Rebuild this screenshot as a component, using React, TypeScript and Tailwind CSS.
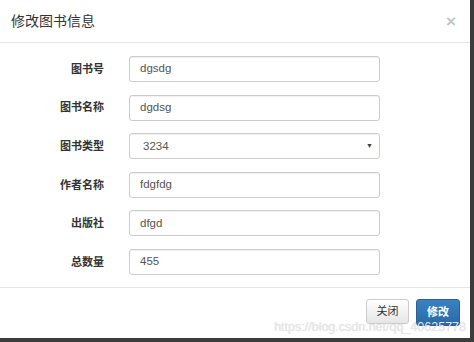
const fields = [
  { label: "图书号", value: "dgsdg" },
  { label: "图书名称", value: "dgdsg" },
  { label: "图书类型", value: "3234", select: true },
  { label: "作者名称", value: "fdgfdg" },
  { label: "出版社", value: "dfgd" },
  { label: "总数量", value: "455" },
];

const font = "font-['Liberation_Sans','Noto_Sans_CJK_SC',sans-serif]";

export default function App() {
  return (
    <div className={`h-[342px] w-[474px] overflow-hidden bg-[#3c3c3c] ${font}`}>
      <div className="relative flex h-[338px] w-[470px] flex-col bg-white">
        <div className="flex h-[43px] items-center justify-between border-b border-[#e5e5e5] pl-[11px] pr-[14px]">
          <h1 className="text-[14px] leading-none text-[#333]">修改图书信息</h1>
          <span className="text-[17px] font-bold leading-none text-[#c4c4c4]">×</span>
        </div>

        <div className="flex flex-col gap-[12.6px] border-b border-[#e5e5e5] pb-[12px] pt-[13px]">
          {fields.map((f) => (
            <div key={f.label} className="flex items-center">
              <label className="w-[104px] text-right text-[11px] font-bold text-[#333]">
                {f.label}
              </label>
              <div className="ml-[25px] flex h-[26px] w-[251px] items-center justify-between rounded-[3px] border border-[#ccc] pl-[10px] pr-[6px] text-[11.5px] text-[#555] shadow-[inset_0_1px_1px_rgba(0,0,0,0.06)]">
                <span className={f.select ? "pl-[3px]" : ""}>{f.value}</span>
                {f.select ? (
                  <span className="text-[7px] text-[#444]">▼</span>
                ) : null}
              </div>
            </div>
          ))}
        </div>

        <div className="flex flex-1 items-start justify-end gap-[7px] pr-[10px] pt-[11px]">
          <button className="h-[25px] w-[43px] rounded-[3px] border border-[#ccc] bg-gradient-to-b from-white to-[#e6e6e6] text-[11px] text-[#333]">
            关闭
          </button>
          <button className="h-[27px] w-[44px] rounded-[3px] border border-[#2a5f8f] bg-gradient-to-b from-[#3a82c2] to-[#2a6aa6] text-[11px] font-bold text-white">
            修改
          </button>
        </div>

        <span className="pointer-events-none absolute bottom-[1px] right-[4px] text-[12.5px] text-[#e8e8e8] [text-shadow:0_0_1px_rgba(0,0,0,0.15)]">
          https://blog.csdn.net/qq_40625778
        </span>
      </div>
    </div>
  );
}
